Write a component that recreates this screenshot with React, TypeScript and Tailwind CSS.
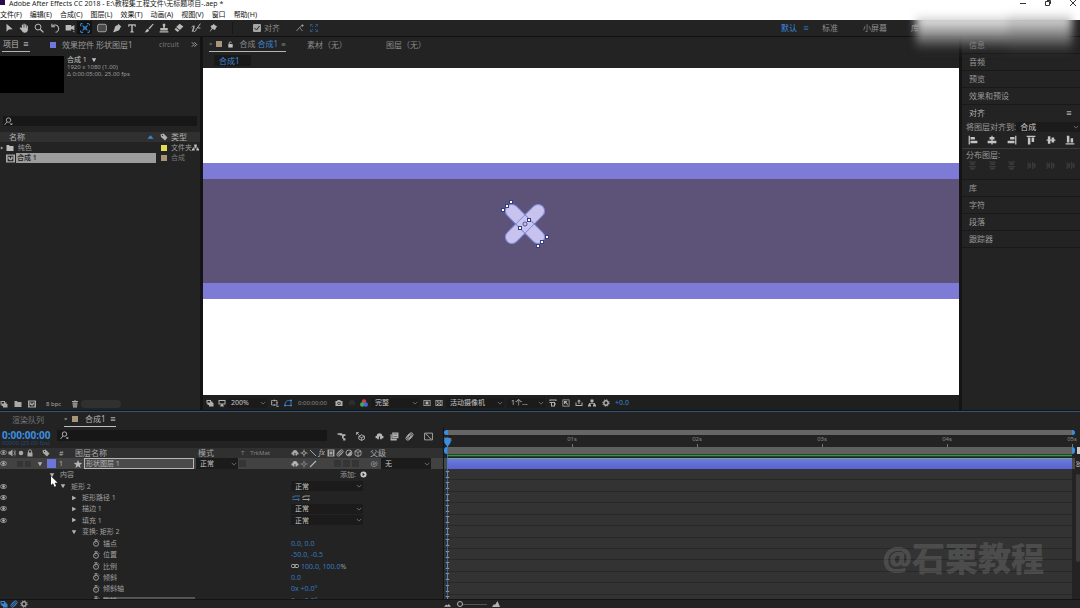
import React from 'react';

type IconProps = { name: keyof typeof icons; className?: string };

const icons = {
  arrow: <path d="M4 1v13l3.500-3.500L14 10z" />,
  hand: <path d="M4.500 8V3.200a1 1 0 0 1 2 0V7h.6V1.800a1 1 0 0 1 2 0V7h.6V2.800a1 1 0 0 1 2 0V8h.6V5a1 1 0 0 1 2 0v5c0 3.500-2 5.500-5 5.500-2.500 0-3.600-1-4.800-3L1.300 8.600c-.6-1.200.8-2 1.600-1.100z" />,
  zoom: <g fill="none" stroke="currentColor" strokeWidth="1.600"><circle cx="6.500" cy="6.500" r="4.700" /><path d="M10 10l5 5" strokeWidth="2.200" /></g>,
  rotate: <g fill="none" stroke="currentColor" strokeWidth="1.700"><path d="M4 4.500A6 6 0 1 1 9 15" /><path d="M3 1v5h5" /></g>,
  video: <path d="M1 3h9v3l5-3v9l-5-3v3H1zM12 13h3v2z" />,
  anchor: <g fill="none" stroke="currentColor" strokeWidth="1.700"><path d="M1 5V1h4M11 1h4v4M15 11v4h-4M5 15H1v-4M4 4l8 8M12 4l-8 8" strokeDasharray="3 1" /><circle cx="8" cy="8" r="2" /></g>,
  rect: <rect x="1" y="2" width="14" height="12" rx="2.500" fill="#4a4a4a" stroke="currentColor" strokeWidth="1.300" />,
  pen: <path d="M10 1l5 5-2 1.500c0 3-2 5-6 5.500l-5 2 4.500-5A1.300 1.300 0 1 1 7.500 11L3 14.500 2 14l2-5c.6-4 2.500-5.500 5-5.500z" />,
  type: <path d="M2 2h12v4h-1.500C12.300 4.500 12 3.800 10.500 3.800H9.200v8.700c0 .9.500 1 1.600 1.100V15H5.200v-1.400c1.100-.1 1.600-.2 1.600-1.100V3.800H5.500C4 3.800 3.700 4.500 3.500 6H2z" />,
  brush: <path d="M14 1l1.500 1L9 10 7 8.500zM6 9.500L8 11c-.5 3-3 4-7 4 2-1 2-5.500 5-5.500z" />,
  stamp: <path d="M6 1h4v3l-1 4h5v4H2V8h5L6 4zM1 13h14v2H1z" />,
  eraser: <path d="M9 1l6 4.500L9.500 11l-6-4.500zM3 7.500L8.500 12 6 14.500 1 10.500z" />,
  roto: <g fill="none" stroke="currentColor" strokeWidth="1.600"><path d="M1 7c3-5 5-1 3 3s2 5 4 2M15 1L7 12M11 8h4M2 14l3-10" /></g>,
  pin: <path d="M8 1l7 5-2 1-1 3-2 1-2.500-2L2 15l4-7-2-2 1-2 3-1z" />,
  snap: <g fill="none" stroke="currentColor" strokeWidth="1.600"><path d="M1 14l6-7 6 7M7 7l5-4" /><circle cx="13" cy="3" r="1.500" fill="currentColor" /></g>,
  grip: <g fill="none" stroke="currentColor" strokeWidth="1.500"><path d="M1 5V1h4M11 1h4v4M15 11v4h-4M5 15H1v-4M3 3l3 3M13 3l-3 3M3 13l3-3M13 13l-3-3" /></g>,
  menu: <path d="M2 3h12v2H2zM2 7h12v2H2zM2 11h12v2H2z" />,
  unlock: <g><path d="M3 7h10v8H3z" /><path d="M5 8V4.500a2.500 2.500 0 0 1 5 0" fill="none" stroke="currentColor" strokeWidth="1.800" /></g>,
  lock: <g><path d="M3 7h10v8H3z" /><path d="M5 8V4.500a3 3 0 0 1 6 0V8" fill="none" stroke="currentColor" strokeWidth="1.800" /></g>,
  chevrons: <path d="M2 3l5 5-5 5M8 3l5 5-5 5" fill="none" stroke="currentColor" strokeWidth="2" />,
  chevron: <path d="M2 5l6 6 6-6" fill="none" stroke="currentColor" strokeWidth="1.800" />,
  down: <path d="M2 3h12l-6 11z" />,
  right: <path d="M3 2l11 6-11 6z" />,
  search: <g fill="none" stroke="currentColor" strokeWidth="1.600"><circle cx="8" cy="5.500" r="4" /><path d="M5 9l-4 5" /><path d="M11 12h4l-2 2z" fill="currentColor" strokeWidth="1" /></g>,
  sort: <path d="M8 3c2 2 4 5 7 8H1c3-3 5-6 7-8z" />,
  tag: <path fillRule="evenodd" d="M1 3l6-2 8 8-5 6-8-7zM4 4v2h2V4z" />,
  folder: <path d="M1 2h5l1.500 2H15v10H1z" />,
  comp: <g><path fillRule="evenodd" d="M0 1h16v14H0zM3 3v10h10V3z" /><path d="M4 5h3v3h2V5h3v3l-2 3H7l-3-2z" /></g>,
  tree: <path d="M5 1h6v5H9v2h5v3h2v4h-6v-4h2v-1.500H4V11h2v4H0v-4h2V8h5V6H5z" />,
  trash: <path fillRule="evenodd" d="M6 1h4v1h4v2H2V2h4zM3 5h10l-1 10H4zM5.500 6.500v7h1v-7zM9.500 6.500v7h1v-7z" />,
  layers: <path fillRule="evenodd" d="M1 2h9v3h3v3h2v7H6v-3H3V9H1zM3 4v3h5V4z" />,
  monitor: <path fillRule="evenodd" d="M1 2h14v9h-5v2h2v2H4v-2h2v-2H1zM3 4v5h10V4z" />,
  region: <g fill="none" stroke="currentColor" strokeWidth="1.500"><path d="M1 3h11v9H1zM6.500 1v4M6.500 10v4M0 7.500h3M10 7.500h4" /><path d="M11 14h4l-2 2z" /></g>,
  mask: <g fill="none" stroke="currentColor" strokeWidth="1.600"><path d="M2 13c0-7 3-10 7-10h5v10z" /><path d="M0 13h4M12 3h4M12 13h4" strokeWidth="3" /></g>,
  camera: <path fillRule="evenodd" d="M1 4h3l2-2h4l2 2h3v10H1zM8 5.500a3.300 3.300 0 1 0 .1 0zM8 7a1.800 1.800 0 1 1-.1 0z" />,
  box: <path fillRule="evenodd" d="M1 2h14v12H1zM2.500 3.500v9h11v-9zM5 5h6v6H5z" />,
  checker: <path fillRule="evenodd" d="M1 2h14v12H1zM2.500 3.500v9h11v-9zM4 4.500h3v2.500h2.500V4.500h3V7h-3v2.500h3V12h-3V9.500H7V12H4V9.500h3V7H4z" />,
  aspect: <path d="M1 1h14v3h-2V3H3v1H1zM4 6h8v3h2v2h-2v4H4V8H1V6zM6 8v5h4V8z" fillRule="evenodd" />,
  fast: <path fillRule="evenodd" d="M1 1h14v14H1zM2.500 2.500v11h11v-11zM4 4h7L8.500 6.500 12 10l-1 2-4-4-3 3z" />,
  share: <path d="M8 1l4 4H9v5H7V5H4zM1 7h2v5h10V7h2v7H1z" />,
  gear: <g fill="none" stroke="currentColor"><circle cx="8" cy="8" r="4.300" strokeWidth="3" /><circle cx="8" cy="8" r="6.500" strokeWidth="2" strokeDasharray="2.500 2.600" /></g>,
  eye: <g><path d="M0 8c4-6 12-6 16 0-4 6-12 6-16 0z" fill="none" stroke="currentColor" strokeWidth="2" /><circle cx="8" cy="8" r="2.800" /></g>,
  speaker: <g><path d="M1 5h3l5-4v14l-5-4H1z" /><path d="M11 4c3 2 3 6 0 8M13 2c4 3 4 9 0 12" fill="none" stroke="currentColor" strokeWidth="1.500" /></g>,
  dot: <circle cx="8" cy="8" r="4.500" />,
  star: <path d="M8 0l2.300 5.600 6 .4-4.600 3.900L13.200 16 8 12.600 2.800 16l1.500-6.100L-.3 6l6-.4z" />,
  shy: <path d="M3 7a5 5 0 0 1 10 0h2v4h-3v2H9V8H7v5H4v-2H1V7z" />,
  sun: <g fill="none" stroke="currentColor" strokeWidth="1.800"><circle cx="8" cy="8" r="3" /><path d="M8 1v3M8 12v3M1 8h3M12 8h3" /></g>,
  backslash: <path d="M2 2l12 12" stroke="currentColor" strokeWidth="2" />,
  slash: <path d="M2 14L14 2" stroke="currentColor" strokeWidth="2.200" />,
  film: <path fillRule="evenodd" d="M1 1h14v14H1zM4 3v10h8V3zM5 5h6v6H5z" />,
  blur: <g fill="none" stroke="currentColor" strokeWidth="1.500"><ellipse cx="6" cy="10" rx="3.500" ry="5" transform="rotate(40 6 10)" /><ellipse cx="8" cy="8" rx="3.500" ry="5" transform="rotate(40 8 8)" /><ellipse cx="10" cy="6" rx="3.500" ry="5" transform="rotate(40 10 6)" /></g>,
  half: <g><circle cx="8" cy="8" r="6" fill="none" stroke="currentColor" strokeWidth="1.800" /><path d="M4 12A5.700 5.700 0 0 0 12 4z" /></g>,
  cube: <path d="M8 1l6 3v8l-6 3-6-3V4zM2 4l6 3 6-3M8 7v8" fill="none" stroke="currentColor" strokeWidth="1.700" />,
  spiral: <path d="M9 8a1.500 1.500 0 1 0-1 1.500c2 0 3-1 3-3 0-2-2-3-4-3-3 0-4.500 2-4.500 4.500 0 3 2 5 5.500 5s6-2 6-6c0-2-.5-3-1-4" fill="none" stroke="currentColor" strokeWidth="1.500" />,
  flow: <path d="M1 2h8v2h6v3h-3v4h3v4h-4v-3l-2-1V6H6L4 5H1z" />,
  draft: <g fill="none" stroke="currentColor" strokeWidth="1.600"><path d="M10 5l5 2.500v5L10 15l-5-2.500v-5zM5 7.500l5 2.500 5-2.500M10 10v5" /><path d="M1 1l4 4M1 5V1h4" /></g>,
  frames: <path fillRule="evenodd" d="M4 1h11v10H4zM1 4h2v8h9v3H1zM6 3v1h7V3zM6 8v1h7V8z" />,
  graph: <g fill="none" stroke="currentColor" strokeWidth="1.500"><path d="M1 2h14v12H1zM3 4c5 0 5 8 10 8" /></g>,
  watch: <g fill="none" stroke="currentColor" strokeWidth="1.900"><circle cx="8" cy="9.500" r="5" /><path d="M8 9.500L6 7M8 4V2M5 1.500h6M12.500 3l2 2" /></g>,
  link: <g fill="none" stroke="currentColor" strokeWidth="2"><rect x="1" y="5" width="7" height="6" rx="2" /><rect x="8" y="5" width="7" height="6" rx="2" /></g>,
  play: <g><circle cx="8" cy="8" r="7" /><path d="M6 4l5 4-5 4z" fill="#232323" /></g>,
  swap: <path d="M1 5h2V3l3 3H3v2H1zM5 3h11v2H5zM1 10h11V8l4 3-4 3v-2H1z" />,
  hill: <path d="M0 13l5-5 3 2 3-3 5 6z" />,
  hills: <path d="M0 14l4-6 2 2 5-8 5 12z" />,
  alignL: <path d="M1 1h2v14H1zM4 3h7v4H4zM4 9h11v4H4z" />,
  alignC: <path d="M7 1h2v2h3v4H9v2h6v4H9v2H7v-2H1V9h6V7H4V3h3z" />,
  alignR: <path d="M13 1h2v14h-2zM5 3h7v4H5zM1 9h11v4H1z" />,
  alignT: <path d="M1 1h14v2H1zM3 4h4v11H3zM9 4h4v7H9z" />,
  alignM: <path d="M3 2h4v5h2V4h4v3h2v2h-2v3H9V9H7v5H3V9H1V7h2z" />,
  alignB: <path d="M1 13h14v2H1zM3 1h4v11H3zM9 5h4v7H9z" />,
  distH: <path d="M2 1h12v2H2zM4 4h8v3H4zM2 9h12v2H2zM4 12h8v3H4z" />,
  distV: <path d="M1 2h2v12H1zM4 4h3v8H4zM9 2h2v12H9zM12 4h3v8h-3z" />,
};

const Icon = ({ name, className = '' }: IconProps) => (
  <svg
    viewBox="0 0 16 16"
    fill="currentColor"
    aria-hidden="true"
    className={`shrink-0 ${className.includes('size-') ? '' : 'size-2'} ${className}`}
  >
    {icons[name]}
  </svg>
);

const Select = ({ label, value, className = '' }: { label: string; value: string; className?: string }) => (
  <span className={`flex h-[10px] shrink-0 items-center bg-[#1b1b1b] pr-px text-[#c8c8c8] ${className}`}>
    <select aria-label={label} className="h-full min-w-0 flex-1 appearance-none bg-transparent p-0 pl-1 outline-none">
      <option>{value}</option>
    </select>
    <Icon name="chevron" className="pointer-events-none size-[6px] text-[#8a8a8a]" />
  </span>
);

const menus = ['文件(F)', '编辑(E)', '合成(C)', '图层(L)', '效果(T)', '动画(A)', '视图(V)', '窗口', '帮助(H)'];

const toolGroups: { gap: string; tools: [keyof typeof icons, string][] }[] = [
  { gap: 'ml-px', tools: [['arrow', '选取'], ['hand', '手形'], ['zoom', '缩放']] },
  { gap: 'ml-px', tools: [['rotate', '旋转'], ['video', '摄像机'], ['anchor', '锚点']] },
  { gap: 'ml-0.5', tools: [['rect', '矩形'], ['pen', '钢笔'], ['type', '文字']] },
  { gap: 'ml-0.5', tools: [['brush', '画笔'], ['stamp', '仿制图章'], ['eraser', '橡皮擦']] },
  { gap: 'ml-0.5', tools: [['roto', 'Roto 笔刷']] },
  { gap: 'ml-0.5', tools: [['pin', '操控点']] },
];

const TopBar = () => (
  <header className="shrink-0">
    <div className="flex h-[9px] items-start bg-white text-[7px] leading-[7px] text-[#222]">
      <span className="size-[5px] bg-[#2c0b4d]" />
      <h1 className="ml-1 whitespace-nowrap">Adobe After Effects CC 2018 - E:\教程集工程文件\无标题项目-.aep *</h1>
      <div className="ml-auto flex items-center gap-[19px] pr-1">
        <button aria-label="最小化" className="h-px w-[6px] bg-[#333]" />
        <button aria-label="还原">
          <svg viewBox="0 0 6 6" className="size-[6px]"><path d="M.5 1.500h4v4h-4zM2 .5h3.500V4" fill="none" stroke="#333" /></svg>
        </button>
        <button aria-label="关闭">
          <svg viewBox="0 0 6 6" className="size-[6px]"><path d="M0 0l6 6M6 0L0 6" stroke="#333" /></svg>
        </button>
      </div>
    </div>
    <nav className="flex h-[11px] items-center gap-2 bg-white text-[7px] leading-[11px] text-[#111]">
      {menus.map((m) => <button key={m}>{m}</button>)}
    </nav>
    <div className="flex h-[17px] items-center border-b border-[#111] bg-[#232323] pb-px text-[8px] text-[#8d8d8d]">
      {toolGroups.map((g, i) => (
        <div key={i} className={`flex ${g.gap}`}>
          {g.tools.map(([name, label]) => (
            <button
              key={name}
              aria-label={label}
              className={`flex h-[13px] w-[15px] items-center justify-center ${name === 'anchor' ? 'bg-[#121212] text-[#3b86d0]' : 'text-[#b9b9b9]'}`}
            >
              <Icon name={name} className="size-[10px]" />
            </button>
          ))}
        </div>
      ))}
      <span className="ml-3 h-3 w-px bg-[#171717]" />
      <label className="ml-5 flex items-center gap-[3px]">
        <input type="checkbox" defaultChecked className="peer sr-only" />
        <svg viewBox="0 0 16 16" className="size-2"><rect width="16" height="16" rx="2" fill="#a5a5a5" /><path d="M3 8l4 4 6-8" fill="none" stroke="#222" strokeWidth="2" /></svg>
        对齐
      </label>
      <button aria-label="边缘对齐" className="ml-4 text-[#a0a0a0]"><Icon name="snap" /></button>
      <button aria-label="网格" className="ml-[6px] text-[#2f6ba5]"><Icon name="grip" /></button>
      <div className="ml-auto flex w-[299px] items-center">
        <button className="text-[#3b8fe0]">默认</button>
        <Icon name="menu" className="ml-[6px] size-[6px] text-[#2f6ba5]" />
        <button className="ml-[13px]">标准</button>
        <button className="ml-[25px]">小屏幕</button>
        <button className="ml-6">库</button>
      </div>
    </div>
  </header>
);

const ProjectPanel = () => (
  <section className="flex w-[200px] shrink-0 flex-col overflow-hidden bg-[#232323] text-[7px] text-[#9a9a9a]">
    <div className="flex h-[15px] items-stretch text-[8px]">
      <button className="ml-[2px] flex items-center gap-1 border-b border-[#b5b5b5] pr-px pl-px text-[#b5b5b5]">
        项目<Icon name="menu" className="size-[6px]" />
      </button>
      <span className="ml-5 size-[6px] self-center bg-[#6f79dc]" />
      <button className="ml-[6px] whitespace-nowrap">效果控件 形状图层1</button>
      <button className="ml-auto text-[7px] text-[#777]">circuit</button>
      <Icon name="chevrons" className="mr-[2px] ml-3 size-[7px] self-center text-[#c0c0c0]" />
    </div>
    <div className="mt-1 flex h-[37px] gap-[3px]">
      <div className="w-16 bg-black" />
      <div className="text-[6px] leading-[8px] whitespace-nowrap">
        <p className="flex items-center gap-1 text-[7px] leading-[7px] text-[#c5c5c5]">合成 1<Icon name="down" className="size-[6px]" /></p>
        <p>1920 x 1080 (1.00)</p>
        <p className="leading-[7px]">Δ 0:00:05:00, 25.00 fps</p>
      </div>
    </div>
    <div className="mx-[3px] mt-[23px] flex h-[10px] items-center bg-[#171717] pl-px">
      <Icon name="search" className="size-[9px] text-[#b0b0b0]" />
      <input aria-label="搜索项目" className="h-full min-w-0 flex-1 bg-transparent outline-none" />
    </div>
    <table className="mt-[6px] w-full table-fixed border-collapse leading-[10px]">
      <colgroup><col className="w-[156px]" /><col className="w-[15px]" /><col /></colgroup>
      <thead>
        <tr className="h-[10px] bg-[#303030] text-left text-[8px] text-[#b0b0b0]">
          <th className="p-0 pl-[9px] font-normal">
            <span className="flex items-center justify-between">名称<Icon name="sort" className="mr-[2px] size-[7px] text-[#3b86d0]" /></span>
          </th>
          <th className="p-0"><Icon name="tag" className="mx-auto size-2" /></th>
          <th className="p-0 font-normal">类型</th>
        </tr>
      </thead>
      <tbody>
        <tr className="h-[11px]">
          <td className="p-0"><span className="flex items-center gap-[2px]"><Icon name="right" className="size-1" /><Icon name="folder" className="size-2 text-[#bbb]" />&nbsp;纯色</span></td>
          <td className="p-0"><span className="mx-auto block size-[6px] bg-[#e5dc55]" /></td>
          <td className="p-0"><span className="flex items-center">文件夹<Icon name="tree" className="size-[7px] text-[#c0c0c0]" /></span></td>
        </tr>
        <tr className="h-[10px]">
          <td className="p-0 text-[#1a1a1a]">
            <span className="flex items-center">
              <Icon name="comp" className="mr-px ml-[6px] size-[9px] text-[#a8a8a8]" />
              <span className="h-[10px] flex-1 bg-[#9d9d9d] pl-px font-medium">合成 1</span>
            </span>
          </td>
          <td className="p-0"><span className="mx-auto block size-[6px] bg-[#a8937a]" /></td>
          <td className="p-0 text-[#777]">合成</td>
        </tr>
      </tbody>
    </table>
    <div className="mt-auto flex h-[13px] items-center gap-[6px] text-[#a9a9a9]">
      <button aria-label="解释素材"><Icon name="layers" /></button>
      <button aria-label="新建文件夹"><Icon name="folder" /></button>
      <button aria-label="新建合成"><Icon name="comp" /></button>
      <button className="ml-1 text-[6px]">8 bpc</button>
      <button aria-label="删除" className="ml-1"><Icon name="trash" /></button>
      <span className="-ml-1 h-2 w-10 rounded-full bg-[#303030]" />
    </div>
  </section>
);

const handles = [[11, 3], [7, 7], [3, 11], [29, 21], [20, 29], [47, 38], [42, 43], [38, 47]];

const CompPanel = () => (
  <section className="flex min-w-0 flex-1 flex-col bg-[#232323] text-[8px] text-[#8a8a8a]">
    <div className="flex h-[15px] items-stretch">
      <div className="ml-[6px] flex items-center gap-[3px] border-b border-[#b5b5b5]">
        <button aria-label="关闭标签" className="text-[6px]">×</button>
        <span className="ml-px size-[6px] bg-[#a8967a]" />
        <Icon name="unlock" className="mx-[2px] size-[7px] text-[#c0c0c0]" />
        <span>合成 <span className="text-[#3b86d0]">合成1</span></span>
        <Icon name="menu" className="size-[5px]" />
      </div>
      <button className="ml-[21px]">素材（无）</button>
      <button className="ml-[39px]">图层（无）</button>
    </div>
    <div className="flex h-4 items-center">
      <button className="ml-[11px] h-[11px] w-[37px] bg-[#191919] pl-[5px] text-left leading-[11px] text-[#3b86d0]">合成1</button>
    </div>
    <div className="relative flex flex-1 flex-col overflow-hidden bg-white pb-px">
      <div className="flex-1" />
      <div className="h-[136px] border-y-[16px] border-[#7d7bd5] bg-[#5d5379]" />
      <div className="flex-1" />
      {/* Shape layer placed on the canvas */}
      <svg viewBox="0 0 50 50" className="absolute top-[131px] left-[297px] size-[50px]">
        <g fill="#c7c3ee" stroke="#8389d8" strokeWidth="1">
          <rect x="0" y="18.500" width="50" height="13" rx="6.500" transform="rotate(-45 25 25)" />
          <rect x="0" y="18.500" width="50" height="13" rx="6.500" transform="rotate(45 25 25)" />
          <path d="M15.800 25l9.200-9.200 9.200 9.200-9.200 9.200z" />
          <circle cx="25" cy="25" r="2" fill="none" stroke="#4c5290" />
        </g>
        {handles.map(([x, y]) => (
          <rect key={`${x}-${y}`} x={x - 1.5} y={y - 1.5} width="3" height="3" fill="#fff" stroke="#35407c" strokeWidth="1" />
        ))}
      </svg>
    </div>
    <div className="flex h-[15px] items-center overflow-hidden bg-[#1f1f1f] text-[7px] whitespace-nowrap text-[#b0b0b0]">
      <div className="ml-[3px] flex gap-1">
        <Icon name="layers" />
        <Icon name="monitor" />
      </div>
      <Select label="放大率" value="200%" className="ml-px w-[40px]" />
      <Icon name="region" className="ml-1" />
      <Icon name="mask" className="ml-[5px] text-[#3b86d0]" />
      <span className="ml-[6px] w-[37px] text-[6px] text-[#8a8a8a]">0:00:00:00</span>
      <Icon name="camera" />
      <Icon name="shy" className="ml-[5px] text-[#303030]" />
      <svg viewBox="0 0 16 16" className="ml-1 size-2 shrink-0">
        <circle cx="8" cy="5" r="4.500" fill="#c94040" /><circle cx="4.500" cy="11" r="4.500" fill="#3fae52" /><circle cx="11.500" cy="11" r="4.500" fill="#4668dd" />
      </svg>
      <Select label="分辨率" value="完整" className="ml-[3px] w-12" />
      <Icon name="box" className="ml-1" />
      <Icon name="checker" className="ml-1" />
      <Select label="3D 视图" value="活动摄像机" className="ml-[3px] w-[58px]" />
      <Select label="视图布局" value="1个..." className="ml-[3px] w-[38px]" />
      <div className="ml-1 flex items-center gap-[5px]">
        <Icon name="aspect" /><Icon name="fast" /><Icon name="share" /><Icon name="tree" />
        <Icon name="gear" className="ml-px size-2" />
        <span className="text-[#3b86d0]">+0.0</span>
      </div>
    </div>
  </section>
);

const PanelTitle = ({ title }: { title: string }) => (
  <button className="block h-[17px] w-full border-b border-[#191919] pb-px pl-[7px] text-left leading-[15px]">{title}</button>
);

const alignIcons = ['alignL', 'alignC', 'alignR', 'alignT', 'alignM', 'alignB'] as const;
const distIcons = ['distH', 'distH', 'distH', 'distV', 'distV', 'distV'] as const;

const SidePanels = () => (
  <aside className="w-[118px] shrink-0 overflow-hidden bg-[#232323] text-[8px] text-[#9a9a9a]">
    {['信息', '音频', '预览', '效果和预设'].map((t) => <PanelTitle key={t} title={t} />)}
    <div className="flex h-4 items-center pr-2 pl-[7px] text-[#b5b5b5]">
      对齐<Icon name="menu" className="ml-auto size-[6px]" />
    </div>
    <div className="flex h-[11px] items-center pl-1 whitespace-nowrap">
      将图层对齐到:
      <Select label="对齐到" value="合成" className="flex-1" />
    </div>
    <div className="flex h-[17px] items-center justify-between border-b border-[#3a3a3a] pr-[5px] pl-[6px] text-[#c4c4c4]">
      {alignIcons.map((n) => <button key={n} aria-label={n}><Icon name={n} className="size-[10px]" /></button>)}
    </div>
    <p className="pl-1 leading-[11px]">分布图层:</p>
    <div className="flex h-[11px] items-center justify-between pr-[5px] pl-[6px] text-[#3c3c3c]">
      {distIcons.map((n, i) => <button key={i} aria-label={n} disabled><Icon name={n} className="size-[9px]" /></button>)}
    </div>
    <div className="mt-2 border-t border-[#191919]">
      {['库', '字符', '段落', '跟踪器'].map((t) => <PanelTitle key={t} title={t} />)}
    </div>
  </aside>
);

const columns = 'grid grid-cols-[34px_38px_124px_42px_53px_79px_61px_1fr] items-center';

const switches = ['shy', 'sun', 'backslash', 'fx', 'film', 'blur', 'half', 'cube'] as const;

const LayerHeader = () => (
  <div className={`${columns} h-[10px] bg-[#303030] text-[#a8a8a8]`}>
    <span className="flex gap-px"><Icon name="eye" className="size-[7px]" /><Icon name="speaker" /><Icon name="dot" /><Icon name="lock" /></span>
    <span className="flex items-center gap-[9px] pl-2"><Icon name="tag" /><span className="text-[7px]">#</span></span>
    <span className="pl-[3px] text-[8px] leading-[10px]">图层名称</span>
    <span className="pl-[2px] text-[8px] leading-[10px]">模式</span>
    <span className="flex gap-[6px] pl-[3px] text-[6px] text-[#858585]"><span>T</span><span>TrkMat</span></span>
    <span className="flex items-center gap-px">
      {switches.map((s) => s === 'fx'
        ? <i key={s} className="w-2 text-center font-serif text-[8px] leading-[8px]">fx</i>
        : <Icon key={s} name={s} />)}
    </span>
    <span className="text-[8px] leading-[10px]">父级</span>
  </div>
);

const LayerRow = () => (
  <div className={`${columns} h-[11px] bg-[#424242] text-[#b5b5b5]`}>
    <span className="flex items-center gap-[2px]">
      <Icon name="eye" className="mr-2 size-[7px]" /><span className="size-[6px] bg-[#353535]" /><span className="size-[6px] bg-[#353535]" />
    </span>
    <span className="flex items-center gap-1 pl-[3px]"><Icon name="down" className="size-[6px]" /><span className="-mr-px size-[9px] bg-[#6a76dc]" />1</span>
    <span className="flex items-center gap-[2px] pr-[2px] pl-[2px]">
      <Icon name="star" className="size-2" />
      <span className="h-[11px] flex-1 border border-[#b8b8b8] bg-[#4b4b4b] pl-px leading-[9px]">形状图层 1</span>
    </span>
    <Select label="模式" value="正常" className="h-[11px]" />
    <span className="ml-px size-[7px] bg-[#353535]" />
    <span className="flex items-center gap-px">
      <Icon name="shy" /><Icon name="sun" className="text-[#888]" /><Icon name="slash" />
      <span className="ml-4 flex gap-[2px]"><span className="size-[7px] bg-[#353535]" /><span className="size-[7px] bg-[#353535]" /><span className="size-[7px] bg-[#353535]" /></span>
    </span>
    <span className="flex items-center gap-[3px]"><Icon name="spiral" className="text-[#999]" /><Select label="父级" value="无" className="h-[11px] flex-1" /></span>
  </div>
);

type Prop = {
  name: string;
  indent: string;
  marker: 'down' | 'right' | 'watch';
  eye?: boolean;
  blend?: boolean;
  extra?: React.ReactNode;
  value?: string;
};

const props: Prop[] = [
  { name: '内容', indent: 'pl-[49px]', marker: 'down', extra: <button className="ml-[49px] flex items-center gap-1 text-[#9a9a9a]">添加:<Icon name="play" className="size-[7px] text-[#c8c8c8]" /></button> },
  { name: '矩形 2', indent: 'pl-[60px]', marker: 'down', eye: true, blend: true },
  { name: '矩形路径 1', indent: 'pl-[71px]', marker: 'right', eye: true, extra: <span className="flex gap-[2px] pl-px"><Icon name="swap" className="size-2 text-[#3b6fae]" /><Icon name="swap" className="size-2 text-[#a0a0a0]" /></span> },
  { name: '描边 1', indent: 'pl-[71px]', marker: 'right', eye: true, blend: true },
  { name: '填充 1', indent: 'pl-[71px]', marker: 'right', eye: true, blend: true },
  { name: '变换: 矩形 2', indent: 'pl-[71px]', marker: 'down' },
  { name: '锚点', indent: 'pl-[92px]', marker: 'watch', value: '0.0, 0.0' },
  { name: '位置', indent: 'pl-[92px]', marker: 'watch', value: '-50.0, -0.5' },
  { name: '比例', indent: 'pl-[92px]', marker: 'watch', value: '100.0, 100.0', extra: <Icon name="link" className="mr-[2px] size-2 text-[#b0b0b0]" /> },
  { name: '倾斜', indent: 'pl-[92px]', marker: 'watch', value: '0.0' },
  { name: '倾斜轴', indent: 'pl-[92px]', marker: 'watch', value: '0x +0.0°' },
  { name: '旋转', indent: 'pl-[92px]', marker: 'watch', value: '0x +0.0°' },
];

const PropRow = ({ name, indent, marker, eye, blend, extra, value }: Prop) => (
  <div className="flex items-center text-[#a0a0a0]">
    <span className={`flex w-[291px] items-center ${eye ? '' : indent}`}>
      {eye && <Icon name="eye" className="-mr-[7px] size-[7px] text-[#c0c0c0]" />}
      <span className={`flex flex-1 items-center ${eye ? indent : ''} ${marker === 'watch' ? 'gap-[3px]' : 'gap-[5px]'}`}>
        <Icon name={marker} className={marker === 'watch' ? 'size-2' : 'size-[6px] text-[#b5b5b5]'} />
        <span className={name === '旋转' ? 'mr-24 flex-1 bg-[#555]' : ''}>{name}</span>
      </span>
    </span>
    {blend && <Select label={`${name} 模式`} value="正常" className="w-[72px]" />}
    {extra}
    {value && <span className="text-[#3878bd]">{value}{name === '比例' && <span className="text-[#999]">%</span>}</span>}
  </div>
);

const Ibeam = () => (
  <svg viewBox="0 0 6 8" className="ml-px h-[7px] w-[5px]"><path d="M1 .5h4M1 7.500h4M3 0v8" stroke="#a9b5c4" /></svg>
);

const Tracks = () => (
  <div className="relative flex min-w-0 flex-1 flex-col overflow-hidden border-l border-[#141414] bg-[#232323]">
    <div className="mt-[3px] flex h-[5px]">
      <span className="w-1 rounded-l-full bg-[#3b8fe0]" />
      <span className="flex-1 bg-[#666]" />
      <span className="mr-[5px] w-[3px] rounded-r-full bg-[#3b8fe0]" />
    </div>
    <div className="mr-2 ml-[3px] flex h-3 justify-between text-[6px] leading-[8px] text-[#8a8a8a]">
      {['00s', '01s', '02s', '03s', '04s', '05s'].map((t) => (
        <span key={t} className="flex w-0 flex-col items-center whitespace-nowrap">
          {t}
          <span className="mt-px h-[3px] w-px shrink-0 bg-[#777]" />
        </span>
      ))}
    </div>
    <div className="flex h-[7px]">
      <span className="w-[3px] rounded-l-sm bg-[#3b8fe0]" />
      <span className="flex-1 bg-[#606060]" />
      <span className="mr-[5px] w-[3px] rounded-r-sm bg-[#3b8fe0]" />
    </div>
    <div className="mr-2 ml-[3px] h-[3px] border-y border-[#1d4a23] bg-[#3d9148]" />
    <div className="mt-px mr-[5px] flex h-[11px] bg-[#4a4a4a]">
      <span className="mr-[3px] ml-[3px] flex-1 border-t border-[#7d95a8] bg-linear-to-b from-[#6b7bd8] to-[#5763cf]" />
    </div>
    <div className="min-h-0 flex-1 overflow-hidden">
      <div className="mr-2 grid h-[137px] grid-rows-12 bg-[#333]">
        {props.map((p) => (
          <div key={p.name} className="flex items-center border-b border-[#282828]"><Ibeam /></div>
        ))}
      </div>
    </div>
    {/* Playhead */}
    <div className="absolute top-2 bottom-0 left-0 flex w-[7px] flex-col items-center">
      <svg viewBox="0 0 7 10" className="mt-[3px] h-[9px] w-[7px] shrink-0"><path d="M0 0h7v5L3.500 10 0 5z" fill="#3b8fe0" /></svg>
      <span className="w-px flex-1 bg-[#3b7fc4]/70" />
    </div>
    {/* Marker bin and vertical scrollbar */}
    <div className="absolute top-5 right-0 bottom-0 flex w-1 flex-col items-center gap-[6px] overflow-hidden text-[#c8c8c8]">
      <span className="h-[7px] w-[3px] bg-current" />
      <Icon name="spiral" className="size-2" />
      <span className="h-[88px] w-1 rounded-full bg-[#3b3b3b]" />
    </div>
  </div>
);

const Timeline = () => (
  <section className="relative flex h-[197px] shrink-0 flex-col overflow-hidden border-t border-[#2f5578] bg-[#232323] text-[7px] text-[#9a9a9a]">
    <div className="flex h-[15px] items-stretch text-[8px]">
      <button className="ml-3 text-[#777]">渲染队列</button>
      <div className="ml-5 flex items-center border-b border-[#c0c0c0] text-[#b5b5b5]">
        <button aria-label="关闭标签" className="w-2 text-left text-[6px]">×</button>
        <span className="mr-[7px] size-[6px] bg-[#a8967a]" />
        合成1
        <Icon name="menu" className="ml-1 size-[6px]" />
      </div>
    </div>
    <div className="flex min-h-0 flex-1">
      <div className="flex w-[443px] shrink-0 flex-col">
        <div className="flex h-[21px] items-start pt-[3px]">
          <div className="w-[57px] pl-[2px] whitespace-nowrap">
            <p className="text-[10px] leading-[10px] font-bold text-[#3b8fe0]">0:00:00:00</p>
            <p className="text-[6px] leading-[7px] text-[#244a70]">00000 (25.00 fps)</p>
          </div>
          <div className="flex h-[11px] w-[270px] items-center bg-[#171717] pl-[3px]">
            <Icon name="search" className="size-[9px] text-[#c0c0c0]" />
            <input aria-label="搜索图层" className="h-full min-w-0 flex-1 bg-transparent outline-none" />
          </div>
          <div className="flex h-3 items-center text-[#b5b5b5]">
            <Icon name="flow" className="ml-[10px] size-[9px]" />
            <Icon name="draft" className="ml-[10px] size-[9px]" />
            <Icon name="shy" className="ml-[10px] size-[9px]" />
            <Icon name="frames" className="ml-[6px] size-[9px]" />
            <Icon name="blur" className="ml-[6px] size-[9px]" />
            <Icon name="graph" className="ml-[10px] size-[9px]" />
          </div>
        </div>
        <LayerHeader />
        <LayerRow />
        <div className="min-h-0 flex-1 overflow-hidden">
          <div className="grid h-[137px] grid-rows-12">
            {props.map((p) => <PropRow key={p.name} {...p} />)}
          </div>
        </div>
      </div>
      <Tracks />
    </div>
    <div className="flex h-[9px] shrink-0 items-center border-t border-[#141414]">
      <div className="flex w-[444px] gap-[2px] text-[#3b86d0]">
        <Icon name="layers" /><Icon name="blur" /><Icon name="gear" className="text-[#a0a0a0]" />
      </div>
      <Icon name="hill" className="size-[7px] text-[#b5b5b5]" />
      <input
        type="range"
        aria-label="时间轴缩放"
        defaultValue={0}
        className="mr-[5px] ml-[6px] h-px w-[30px] appearance-none bg-[#555] [&::-webkit-slider-thumb]:size-[6px] [&::-webkit-slider-thumb]:appearance-none [&::-webkit-slider-thumb]:rounded-full [&::-webkit-slider-thumb]:border [&::-webkit-slider-thumb]:border-[#b5b5b5] [&::-webkit-slider-thumb]:bg-[#232323]"
      />
      <Icon name="hills" className="text-[#b5b5b5]" />
    </div>
    {/* Watermark */}
    <p className="pointer-events-none absolute right-9 bottom-8 text-[33px] leading-[34px] font-black text-white/15">@石栗教程</p>
    {/* Mouse pointer */}
    <svg viewBox="0 0 8 12" className="absolute top-[64px] left-[51px] h-[11px] w-[7px]"><path d="M0 0v10l2.300-2L4 12l1.800-.8L4.200 7.500H7.500z" fill="#fff" /></svg>
  </section>
);

const App: React.FC = () => (
  <div className="relative flex h-screen flex-col overflow-hidden bg-[#141414] font-['Noto_Sans','Noto_Sans_CJK_SC',sans-serif] leading-none">
    <TopBar />
    <main className="flex min-h-0 flex-1 gap-[3px] pb-px">
      <ProjectPanel />
      <CompPanel />
      <SidePanels />
    </main>
    <Timeline />
    {/* Frosted overlay */}
    <div className="pointer-events-none absolute top-[14px] right-2 flex h-[38px] w-[156px] items-start blur-xs">
      <span className="h-9 flex-1 bg-linear-to-b from-white via-[#a0a0a0] to-[#232323]/40" />
      <span className="h-[38px] w-16 bg-linear-to-b from-[#eee] via-[#8e8e8e] to-[#232323]/40" />
    </div>
  </div>
);

export default App;
